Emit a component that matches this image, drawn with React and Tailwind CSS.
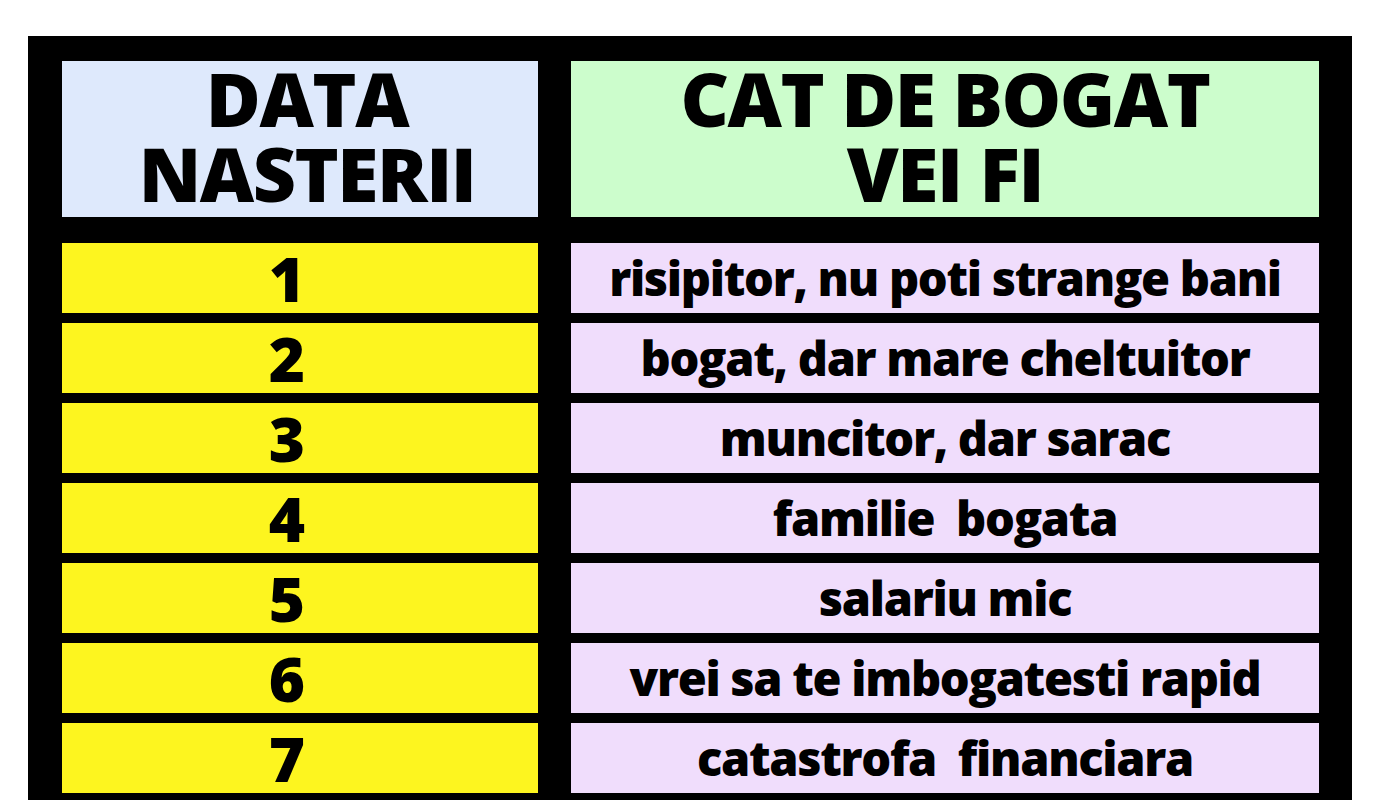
const rows = [
  ["1", "risipitor, nu poti strange bani"],
  ["2", "bogat, dar mare cheltuitor"],
  ["3", "muncitor, dar sarac"],
  ["4", "familie\u00a0 bogata"],
  ["5", "salariu mic"],
  ["6", "vrei sa te imbogatesti rapid"],
  ["7", "catastrofa\u00a0 financiara"],
];

const font = { fontFamily: '"Open Sans", "Noto Sans", sans-serif' };

export default function App() {
  return (
    <div className="h-[800px] overflow-hidden bg-white pt-[36px] pl-[28px]" style={font}>
      <div className="w-[1324px] bg-black pt-[25px] pl-[34px] pr-[33px] pb-[20px]">
        <div className="grid grid-cols-[476px_748px] gap-x-[33px]">
          <div className="flex h-[156px] flex-col items-center justify-center bg-[#dee9fc] pb-[6px] pl-[14px] text-[75px] font-extrabold uppercase leading-[75px] tracking-[-1.5px] text-black">
            <span>Data</span>
            <span>Nasterii</span>
          </div>
          <div className="flex h-[156px] flex-col items-center justify-center bg-[#ccfdcc] pb-[6px] text-[75px] font-extrabold uppercase leading-[75px] tracking-[-1.5px] text-black">
            <span>Cat de bogat</span>
            <span>Vei fi</span>
          </div>
        </div>
        <div className="mt-[26px] grid grid-cols-[476px_748px] gap-x-[33px] gap-y-[10px]">
          {rows.map(([n, text]) => (
            <div key={n} className="contents">
              <div className="flex h-[70px] items-center justify-center bg-[#fdf51f] pr-[26px] text-[62px] font-extrabold leading-none text-black">
                {n}
              </div>
              <div className="flex h-[70px] items-center justify-center bg-[#f0ddfc] text-[47px] font-extrabold leading-none tracking-[-1.3px] text-black">
                {text}
              </div>
            </div>
          ))}
        </div>
      </div>
    </div>
  );
}
